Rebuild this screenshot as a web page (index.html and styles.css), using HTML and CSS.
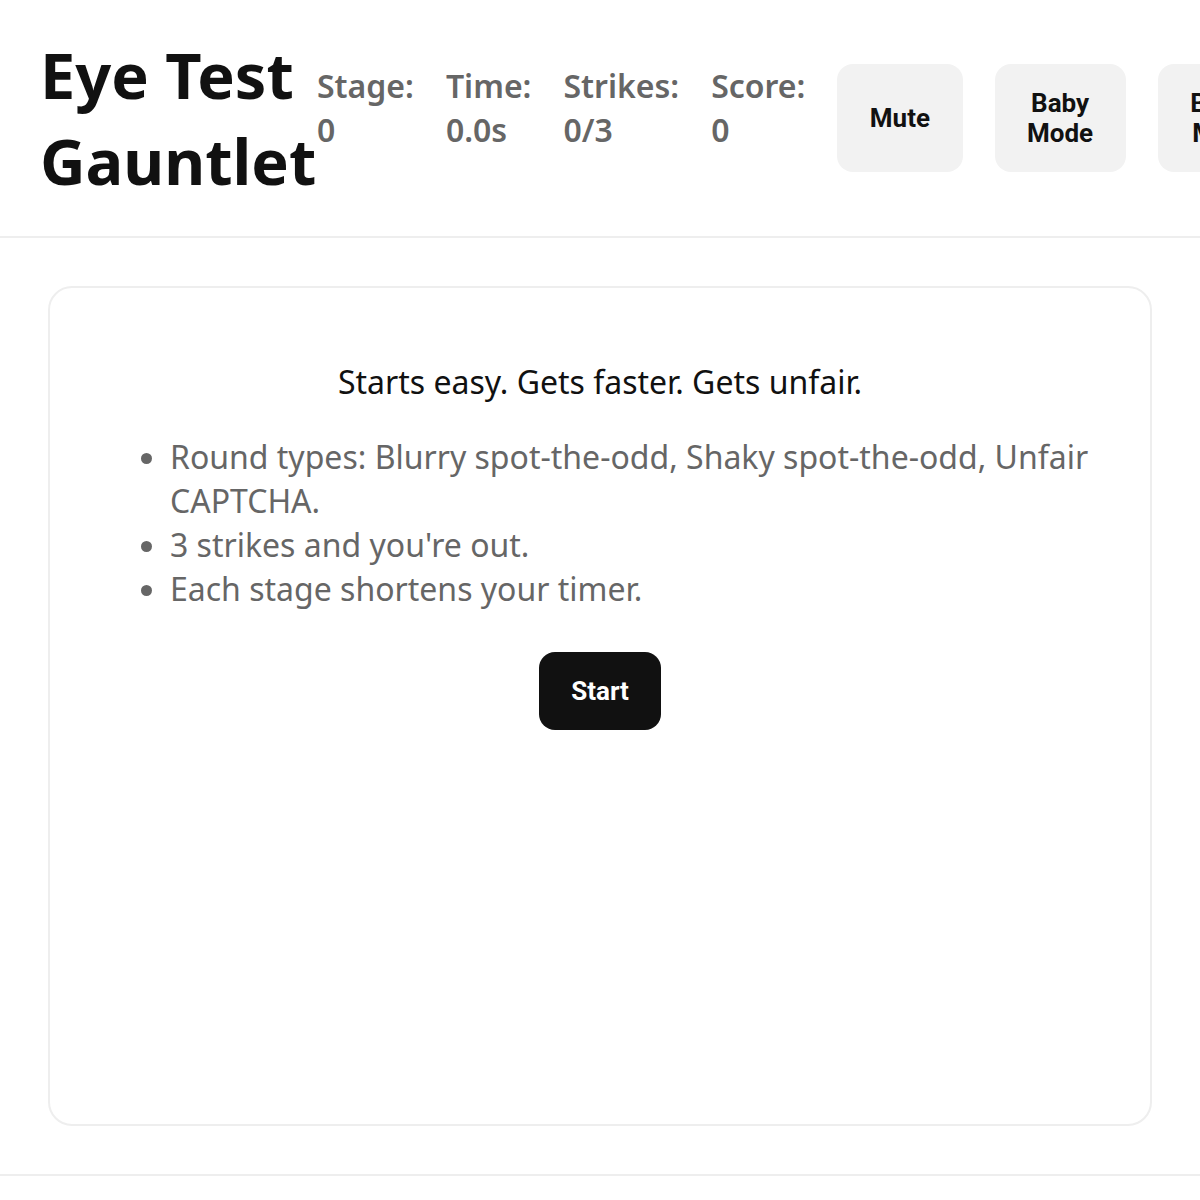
FILE: index.html
```html
<!DOCTYPE html>
<html lang="en">
<head>
    <meta charset="UTF-8">
    <meta name="viewport" content="width=device-width, initial-scale=1.0">
    <title>Eye Test Gauntlet</title>
    <link rel="stylesheet" href="styles.css">
</head>
<body>

    <header>
        <h1>Eye&nbsp;Test Gauntlet</h1>
        <div class="toolbar">
            <div class="stat"><span>Stage:</span><span id="stage">0</span></div>
            <div class="stat"><span>Time:</span><span id="time">0.0s</span></div>
            <div class="stat"><span>Strikes:</span><span id="strikes">0/3</span></div>
            <div class="stat"><span>Score:</span><span id="score">0</span></div>
            <button class="btn">Mute</button>
            <button class="btn">Baby<br>Mode</button>
            <button class="btn">Brutal<br>Mode</button>
        </div>
    </header>

    <main>
        <div class="card">
            <p class="intro">Starts easy. Gets faster. Gets unfair.</p>
            <ul class="rules">
                <li>Round types: Blurry spot-the-odd, Shaky spot-the-odd, Unfair CAPTCHA.</li>
                <li>3 strikes and you're out.</li>
                <li>Each stage shortens your timer.</li>
            </ul>
            <button class="btn btn-dark">Start</button>
        </div>
    </main>

    <footer></footer>

</body>
</html>
```

FILE: styles.css
```css
body {
    margin: 0;
    font-family: "Noto Sans", sans-serif;
    color: #111;
    background: #fff;
}

header {
    display: flex;
    align-items: center;
    gap: 32px;
    padding: 32px 40px;
    border-bottom: 2px solid #eee;
}

h1 {
    flex: 0 0 245px;
    width: 245px;
    margin: 0;
    font-size: 63px;
    font-weight: 700;
    line-height: 86px;
}

.toolbar {
    display: flex;
    gap: 32px;
    flex: none;
}

.stat {
    display: flex;
    flex-direction: column;
    font-size: 32px;
    font-weight: 600;
    line-height: 44px;
    color: #666;
}

.btn {
    flex: none;
    padding: 24px 32.5px;
    border: none;
    border-radius: 16px;
    background: #f2f2f2;
    color: #111;
    font-family: Roboto, sans-serif;
    font-size: 26px;
    font-weight: 700;
    line-height: 30px;
    cursor: pointer;
}

main {
    padding: 48px;
}

.card {
    min-height: 756px;
    padding: 40px;
    border: 2px solid #eee;
    border-radius: 24px;
    text-align: center;
}

.intro {
    margin: 32px 0;
    font-size: 32px;
}

.rules {
    margin: 32px 0 41px;
    padding-left: 80px;
    text-align: left;
    font-size: 32px;
    line-height: 44px;
    color: #666;
}

.btn-dark {
    background: #111;
    color: #fff;
}

footer {
    border-top: 2px solid #eee;
    height: 40px;
}
```
